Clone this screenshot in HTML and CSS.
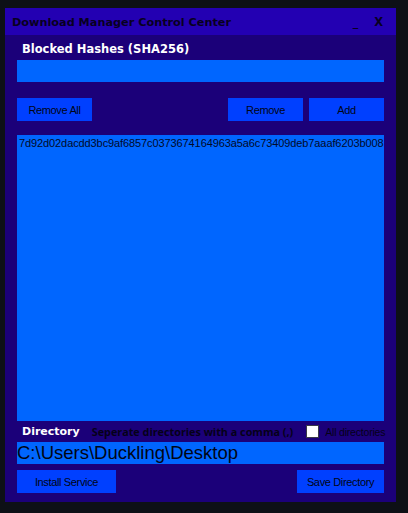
FILE: index.html
```html
<!DOCTYPE html>
<html>
<head>
<meta charset="utf-8">
<link rel="stylesheet" href="styles.css">
</head>
<body>
<div class="window">
  <div class="titlebar">
    <span class="title">Download Manager Control Center</span>
    <span class="min">_</span>
    <span class="close">X</span>
  </div>
  <div class="content">
    <div class="label-row"><span class="label">Blocked Hashes (SHA256)</span></div>
    <div class="input"></div>
    <div class="btn-row">
      <div class="btn w75">Remove All</div>
      <div class="spacer"></div>
      <div class="btn w75">Remove</div>
      <div class="btn w75">Add</div>
    </div>
    <div class="list">
      <div class="item">7d92d02dacdd3bc9af6857c0373674164963a5a6c73409deb7aaaf6203b008</div>
    </div>
    <div class="dir-row">
      <span class="label dir-label">Directory</span>
      <span class="hint">Seperate directories with a comma (,)</span>
      <span class="check"></span>
      <span class="all">All directories</span>
    </div>
    <div class="input path">C:\Users\Duckling\Desktop</div>
    <div class="btn-row bottom">
      <div class="btn w99">Install Service</div>
      <div class="spacer"></div>
      <div class="btn w87">Save Directory</div>
    </div>
  </div>
</div>
</body>
</html>
```

FILE: styles.css
```css
html, body {
  margin: 0;
  padding: 0;
  background: #0d1016;
  width: 408px;
  height: 513px;
  overflow: hidden;
}

.window {
  margin: 8px 0 0 5px;
  width: 391px;
  height: 494px;
  display: flex;
  flex-direction: column;
  background: #1b0079;
}

.titlebar {
  height: 27px;
  background: #2300b2;
  display: flex;
  align-items: center;
  padding: 0 0 0 7px;
  font-family: "DejaVu Sans", sans-serif;
  font-weight: bold;
  color: #08001f;
}

.title {
  font-size: 11.25px;
  flex: 1;
  padding-top: 1px;
}

.min {
  font-size: 11px;
  margin-right: 16px;
  padding-top: 2px;
}

.close {
  font-size: 11.5px;
  margin-right: 13px;
}

.content {
  flex: 1;
  display: flex;
  flex-direction: column;
  padding: 0 12px;
}

.label {
  font-family: "DejaVu Sans", sans-serif;
  font-weight: bold;
  font-size: 11.5px;
  color: #ffffff;
}

.label-row {
  height: 25px;
  display: flex;
  align-items: center;
  padding-left: 5px;
  padding-top: 2px;
  box-sizing: border-box;
}

.input {
  height: 22px;
  background: #0066ff;
}

.btn-row {
  display: flex;
  gap: 6px;
  margin-top: 16px;
}

.btn-row.bottom {
  margin-top: 6px;
}

.spacer {
  flex: 1;
}

.btn {
  height: 23px;
  background: #0040ff;
  display: flex;
  align-items: center;
  justify-content: center;
  font-family: "Liberation Sans", Arial, sans-serif;
  font-size: 11px;
  letter-spacing: -0.35px;
  color: #000514;
}

.w75 { width: 75px; }
.w99 { width: 99px; }
.w87 { width: 87px; }

.list {
  margin-top: 14px;
  height: 286px;
  background: #0066ff;
  overflow: hidden;
}

.item {
  font-family: "Liberation Sans", Arial, sans-serif;
  font-size: 11px;
  letter-spacing: -0.1px;
  color: #000a2a;
  white-space: nowrap;
  padding: 2px 0 0 2px;
}

.dir-row {
  height: 21px;
  display: flex;
  align-items: center;
  padding-left: 5px;
  white-space: nowrap;
}

.dir-label {
  font-size: 11px;
}

.hint {
  font-family: "Open Sans", sans-serif;
  font-weight: 700;
  font-size: 10.8px;
  color: #050018;
  margin-left: 12px;
}

.check {
  width: 11px;
  height: 11px;
  background: #ffffff;
  border: 1px solid #3a3a48;
  margin-left: 13px;
  flex: none;
}

.all {
  font-family: "Liberation Sans", Arial, sans-serif;
  font-size: 10.5px;
  letter-spacing: -0.2px;
  color: #050018;
  margin-left: 6px;
}

.path {
  font-family: "Liberation Sans", Arial, sans-serif;
  font-size: 18.5px;
  line-height: 22px;
  color: #000514;
  white-space: nowrap;
}
```
